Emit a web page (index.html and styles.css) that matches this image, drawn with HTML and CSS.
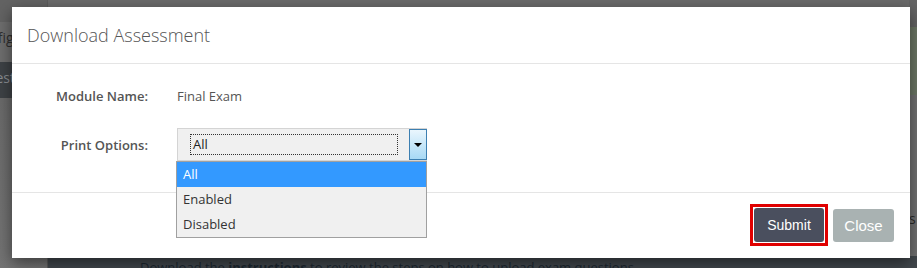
FILE: index.html
```html
<!DOCTYPE html>
<html lang="en">
<head>
  <meta charset="UTF-8">
  <title>Download Assessment</title>
  <link rel="stylesheet" href="styles.css">
</head>
<body>
  <div class="backdrop">
    <aside class="side">
      <div class="side-top"></div>
      <div class="side-link">Config</div>
      <div class="side-active">Questions</div>
      <div class="side-rest"></div>
    </aside>
    <div class="page">
      <div class="page-top">
        <div class="page-fill"></div>
        <div class="page-edge">
          <div class="edge-gray"></div>
          <div class="edge-green"></div>
          <div class="edge-rest"><span>s</span></div>
        </div>
      </div>
      <div class="page-note">Download the <b>instructions</b> to review the steps on how to upload exam questions.</div>
    </div>
  </div>

  <div class="modal">
    <div class="modal-header">
      <h4 class="modal-title">Download Assessment</h4>
    </div>
    <div class="modal-body">
      <div class="form-row">
        <label class="form-label">Module Name:</label>
        <div class="form-value">Final Exam</div>
      </div>
      <div class="form-row">
        <label class="form-label">Print Options:</label>
        <div class="select">
          <div class="select-box">
            <span class="select-focus">All</span>
          </div>
          <div class="select-btn"><span class="arrow"></span></div>
          <ul class="select-list">
            <li class="selected">All</li>
            <li>Enabled</li>
            <li>Disabled</li>
          </ul>
        </div>
      </div>
    </div>
    <div class="modal-footer">
      <div class="btn-ring"><button class="btn btn-submit">Submit</button></div>
      <button class="btn btn-close">Close</button>
    </div>
  </div>
</body>
</html>
```

FILE: styles.css
```css
* { box-sizing: border-box; margin: 0; padding: 0; }
body { width: 917px; height: 268px; overflow: hidden; position: relative; background: #676767; font-family: 'Open Sans', 'Noto Sans', sans-serif; }

/* page behind the dialog */
.backdrop { display: flex; height: 268px; }
.side { width: 48px; display: flex; flex-direction: column; background: #6a6a6a; border-right: 1px solid #5c5c5c; }
.side-top { height: 22px; background: #636363; }
.side-link { height: 40px; line-height: 32px; font-size: 14px; color: #2e2e2e; text-indent: -28px; overflow: hidden; white-space: nowrap; background: #6e6e6e; }
.side-active { height: 36px; line-height: 32px; font-size: 14px; color: #8a8e92; text-indent: -24px; overflow: hidden; white-space: nowrap; background: #3e4246; }
.side-rest { flex: 1; background: linear-gradient(#6a6a6a, #747474); }
.page { flex: 1; display: flex; flex-direction: column; }
.page-top { flex: 1; display: flex; background: #6b6b6b; }
.page-fill { flex: 1; }
.page-edge { width: 8px; display: flex; flex-direction: column; }
.edge-gray { height: 27px; background: #656565; }
.edge-green { height: 68px; background: #6d7866; }
.edge-rest { flex: 1; background: #727272; font-size: 14px; color: #2a2a2a; padding-top: 114px; }
.page-note { height: 12px; padding-left: 92px; background: #42484d; font-size: 13px; line-height: 22px; color: #1c2730; white-space: nowrap; overflow: hidden; }

/* dialog */
.modal { position: absolute; left: 12px; top: 7px; width: 898px; height: 251px; background: #fff; box-shadow: 0 5px 15px rgba(0, 0, 0, 0.5); display: flex; flex-direction: column; }
.modal-header { height: 57px; padding: 0 15px; border-bottom: 1px solid #e5e5e5; display: flex; align-items: center; }
.modal-title { font-size: 18px; font-weight: 300; color: #555; }
.modal-body { height: 128px; padding-top: 20px; }
.form-row { display: flex; align-items: center; height: 24px; margin-bottom: 20px; }
.form-label { width: 136px; text-align: right; font-size: 13px; font-weight: 600; color: #555; }
.form-value { margin-left: 29px; font-size: 13px; color: #555; }
.form-row + .form-row { height: 33px; }

.select { position: relative; margin-left: 29px; width: 250px; height: 33px; display: flex; background: #f0f0f0; border: 1px solid #d4d4d4; }
.select-box { flex: 1; display: flex; align-items: center; padding-left: 12px; }
.select-focus { display: block; width: 208px; height: 21px; border: 1px dotted #333; font-size: 13px; line-height: 19px; padding-left: 2px; color: #222; }
.select-btn { width: 18px; margin: 0 -1px 0 0; border: 1px solid #3c7fb1; background: linear-gradient(#eaf6fd, #a7d9f5); display: flex; align-items: center; justify-content: center; }
.arrow { width: 0; height: 0; border-left: 4px solid transparent; border-right: 4px solid transparent; border-top: 4px solid #000; }
.select-list { position: absolute; left: -2px; top: 32px; width: 251px; list-style: none; background: #f0f0f0; border: 1px solid #a0a0a0; z-index: 2; }
.select-list li { height: 25px; line-height: 25px; padding-left: 6px; font-size: 13px; color: #333; }
.select-list li.selected { background: #3399ff; color: #fff; }

.modal-footer { flex: 1; border-top: 1px solid #e5e5e5; display: flex; justify-content: flex-end; align-items: center; padding: 0 16px 2px 0; gap: 5px; }
.btn-ring { border: 3px solid #e00000; padding: 1px; }
.btn { border: none; border-radius: 3px; font-family: 'Liberation Sans', Arial, sans-serif; color: #fff; }
.btn-submit { display: block; width: 70px; height: 34px; background: #4a4f5e; font-size: 14px; }
.btn-close { width: 61px; height: 33px; background: #a9b2b2; font-size: 15px; margin-top: 2px; }
```
